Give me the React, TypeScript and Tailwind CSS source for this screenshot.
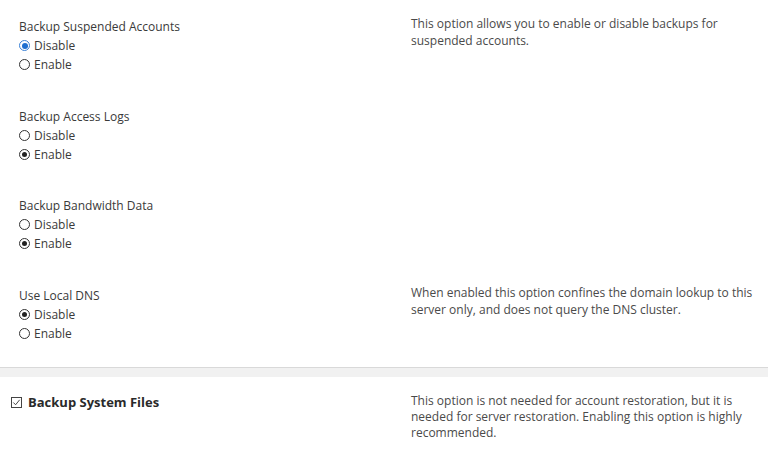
import { useState } from 'react';

type Option = {
  key: string;
  label: string;
  value: 'disable' | 'enable';
  description?: string[];
  accent?: boolean;
};

const options: Option[] = [
  {
    key: 'suspended',
    label: 'Backup Suspended Accounts',
    value: 'disable',
    accent: true,
    description: ['This option allows you to enable or disable backups for suspended accounts.'],
  },
  { key: 'logs', label: 'Backup Access Logs', value: 'enable' },
  { key: 'bandwidth', label: 'Backup Bandwidth Data', value: 'enable' },
  {
    key: 'dns',
    label: 'Use Local DNS',
    value: 'disable',
    description: ['When enabled this option confines the domain lookup to this server only, and does not query the DNS cluster.'],
  },
];

function Radio({ checked, accent }: { checked: boolean; accent?: boolean }) {
  if (checked && accent) {
    return (
      <span className="flex h-[11px] w-[11px] items-center justify-center rounded-full border border-[#3b82d6] bg-white">
        <span className="h-[6px] w-[6px] rounded-full bg-[#1e6fd0]" />
      </span>
    );
  }
  return (
    <span className="flex h-[11px] w-[11px] items-center justify-center rounded-full border border-[#333] bg-white">
      {checked && <span className="h-[5px] w-[5px] rounded-full bg-[#222]" />}
    </span>
  );
}

function OptionRow({ opt }: { opt: Option }) {
  const [value, setValue] = useState(opt.value);
  return (
    <div className="flex h-[89.5px]">
      <div className="w-[392px] pt-[17px] text-[12px] leading-[19px] text-[#3a3a3a]">
        <div>{opt.label}</div>
        {(['disable', 'enable'] as const).map((v) => (
          <label key={v} className="flex cursor-pointer items-center gap-[4px]" onClick={() => setValue(v)}>
            <Radio checked={value === v} accent={opt.accent} />
            <span>{v === 'disable' ? 'Disable' : 'Enable'}</span>
          </label>
        ))}
      </div>
      {opt.description && (
        <div className="w-[345px] pt-[15px] text-[12px] leading-[17px] text-[#4a4a4a]">
          {opt.description[0]}
        </div>
      )}
    </div>
  );
}

export default function App() {
  return (
    <div className="h-[454px] w-[768px] overflow-hidden bg-white" style={{ fontFamily: '"Open Sans", "Liberation Sans", sans-serif' }}>
      <div className="pl-[19px]">
        {options.map((opt) => (
          <OptionRow key={opt.key} opt={opt} />
        ))}
      </div>

      {/* section divider */}
      <div className="mt-[9px] h-[10px] border-t border-[#d9d9d9] bg-[#f1f1f1]" />

      <div className="flex pt-[16px]">
        <div className="flex w-[411px] items-start gap-[6px] pl-[11px] pt-[1px]">
          <span className="mt-[3px] flex h-[11px] w-[11px] items-center justify-center border border-[#444] bg-white">
            <svg viewBox="0 0 10 10" className="h-[9px] w-[9px]">
              <path d="M1.5 5 L4 7.5 L8.5 2" fill="none" stroke="#333" strokeWidth="1" />
            </svg>
          </span>
          <span className="text-[13px] font-bold leading-[16px] text-[#2a2a2a]">Backup System Files</span>
        </div>
        <div className="w-[345px] text-[12px] leading-[16px] text-[#4a4a4a]">
          This option is not needed for account restoration, but it is needed for server restoration. Enabling this option is highly recommended.
        </div>
      </div>
    </div>
  );
}
